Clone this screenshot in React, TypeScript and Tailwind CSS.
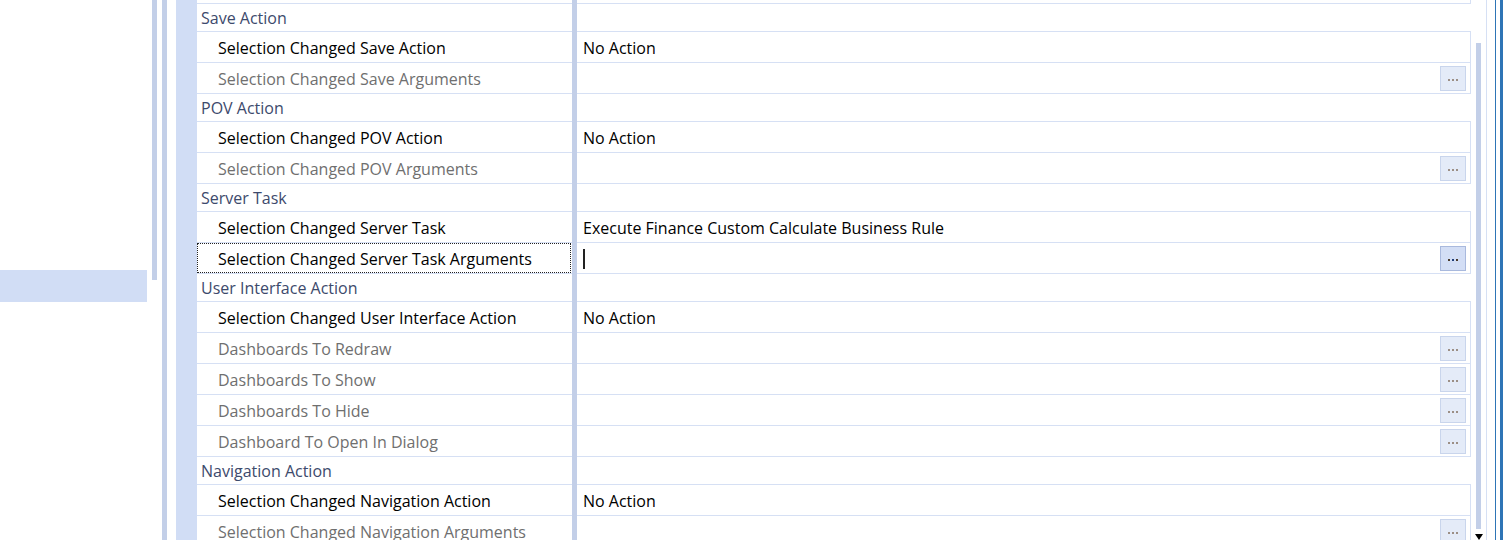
import React from "react";

type Row =
  | { kind: "cat"; label: string }
  | { kind: "prop"; label: string; value?: string; enabled: boolean; button?: boolean; focused?: boolean };

const rows: Row[] = [
  { kind: "cat", label: "Save Action" },
  { kind: "prop", label: "Selection Changed Save Action", value: "No Action", enabled: true },
  { kind: "prop", label: "Selection Changed Save Arguments", enabled: false, button: true },
  { kind: "cat", label: "POV Action" },
  { kind: "prop", label: "Selection Changed POV Action", value: "No Action", enabled: true },
  { kind: "prop", label: "Selection Changed POV Arguments", enabled: false, button: true },
  { kind: "cat", label: "Server Task" },
  { kind: "prop", label: "Selection Changed Server Task", value: "Execute Finance Custom Calculate Business Rule", enabled: true },
  { kind: "prop", label: "Selection Changed Server Task Arguments", enabled: true, button: true, focused: true },
  { kind: "cat", label: "User Interface Action" },
  { kind: "prop", label: "Selection Changed User Interface Action", value: "No Action", enabled: true },
  { kind: "prop", label: "Dashboards To Redraw", enabled: false, button: true },
  { kind: "prop", label: "Dashboards To Show", enabled: false, button: true },
  { kind: "prop", label: "Dashboards To Hide", enabled: false, button: true },
  { kind: "prop", label: "Dashboard To Open In Dialog", enabled: false, button: true },
  { kind: "cat", label: "Navigation Action" },
  { kind: "prop", label: "Selection Changed Navigation Action", value: "No Action", enabled: true },
  { kind: "prop", label: "Selection Changed Navigation Arguments", enabled: false, button: true },
];

function Ellipsis({ active }: { active?: boolean }) {
  return (
    <div
      className={
        "mr-[4px] flex h-[25px] w-[26px] items-center justify-center gap-[2px] border pt-[3px] " +
        (active ? "border-[#a9b9dd] bg-[#d3def5]" : "border-[#c9d5ec] bg-[#e4ebf8]")
      }
    >
      <span className={"h-[2px] w-[2px] " + (active ? "bg-[#4a3a2a]" : "bg-[#9c8f86]")} />
      <span className={"h-[2px] w-[2px] " + (active ? "bg-[#1f3e7a]" : "bg-[#9c8f86]")} />
      <span className={"h-[2px] w-[2px] " + (active ? "bg-[#4a3a2a]" : "bg-[#9c8f86]")} />
    </div>
  );
}

export default function App() {
  return (
    <div
      className="flex h-[540px] w-[1503px] overflow-hidden bg-white text-[16px] leading-none"
      style={{ fontFamily: '"Segoe UI", "Open Sans", "Noto Sans", sans-serif' }}
    >
      {/* left panel */}
      <div className="flex w-[147px] shrink-0 flex-col">
        <div className="h-[270px]" />
        <div className="h-[32px] bg-[#d1ddf5]" />
      </div>
      <div className="w-[5px] shrink-0" />
      <div className="flex w-[5px] shrink-0 flex-col">
        <div className="h-[280px] bg-[#c3cfe8]" />
      </div>
      <div className="w-[5px] shrink-0" />
      <div className="w-[5px] shrink-0 bg-[#c3cfe8]" />
      <div className="w-[9px] shrink-0" />
      {/* gutter */}
      <div className="w-[21px] shrink-0 bg-[#d1ddf5]" />
      {/* grid */}
      <div className="flex w-[1274px] shrink-0 flex-col">
        {/* partial top row */}
        <div className="flex h-[4px] shrink-0">
          <div className="w-[375px] border-b border-[#d6e0f4]" />
          <div className="w-[5px] bg-[#c3cfe8]" />
          <div className="w-[894px] border-b border-r border-[#d6e0f4]" />
        </div>
        {rows.map((r, i) =>
          r.kind === "cat" ? (
            <div key={i} className="flex h-[28px] shrink-0">
              <div className="flex w-[375px] items-center border-b border-[#d6e0f4] pl-[4px] pt-[1px] text-[#3d4a6c]">
                {r.label}
              </div>
              <div className="w-[5px] bg-[#c3cfe8]" />
              <div className="w-[894px] border-b border-[#d6e0f4]" />
            </div>
          ) : (
            <div key={i} className="flex h-[31px] shrink-0">
              <div className="flex w-[375px] border-b border-[#d6e0f4]">
                <div
                  className={
                    "flex flex-1 items-center pt-[1px] " +
                    (r.focused ? "border border-dotted border-[#222] pl-[20px] mr-[1px]" : "pl-[21px]") +
                    " " +
                    (r.enabled ? "text-black" : "text-[#6f6f6f]")
                  }
                >
                  {r.label}
                </div>
              </div>
              <div className="w-[5px] bg-[#c3cfe8]" />
              <div className="flex w-[894px] items-center justify-between border-b border-r border-[#d6e0f4] pl-[6px]">
                <div className="flex items-center pt-[1px] text-black">
                  {r.focused ? <span className="h-[20px] w-[2px] bg-[#222]" /> : r.value}
                </div>
                {r.button ? <Ellipsis active={r.focused} /> : null}
              </div>
            </div>
          )
        )}
      </div>
      {/* scrollbar */}
      <div className="w-[5px] shrink-0" />
      <div className="flex w-[5px] shrink-0 flex-col">
        <div className="h-[43px]" />
        <div className="h-[489px] bg-[#c3cfe8]" />
        <div className="h-[5px]" />
        <svg width="8" height="6" viewBox="0 0 8 6" className="-ml-[1px] shrink-0">
          <path d="M0 0 H8 L4 6 Z" fill="#000" />
        </svg>
      </div>
      <div className="w-[5px] shrink-0" />
      <div className="w-[1px] shrink-0 bg-[#d6e0f4]" />
      <div className="w-[8px] shrink-0" />
      <div className="w-[1px] shrink-0 bg-[#2e75b6]" />
      <div className="w-[4px] shrink-0" />
      <div className="w-[3px] shrink-0 bg-[#2e75b6]" />
    </div>
  );
}
